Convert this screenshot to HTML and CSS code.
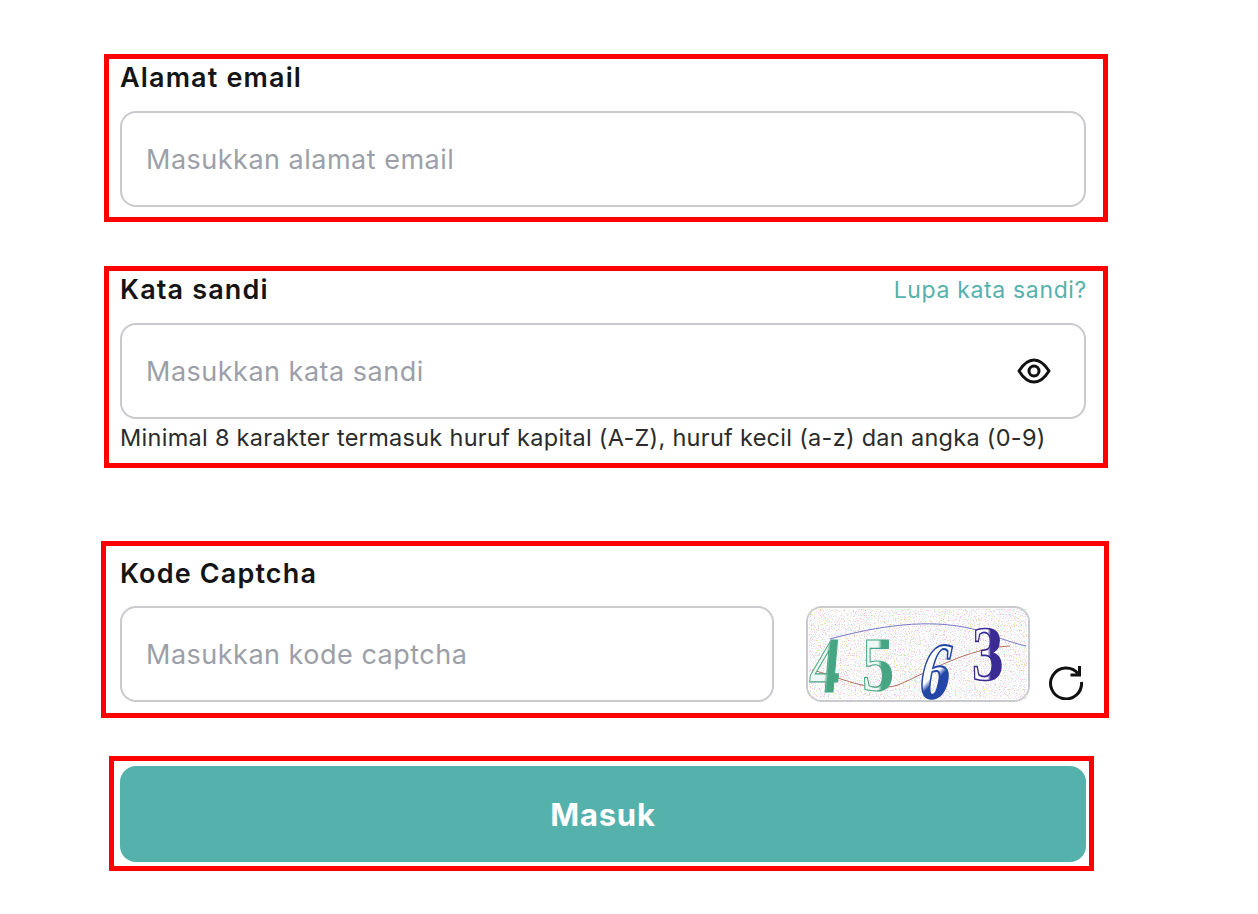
FILE: index.html
```html
<!DOCTYPE html>
<html lang="en">
<head>
    <meta charset="UTF-8">
    <meta name="viewport" content="width=device-width, initial-scale=1.0">
    <title>Masuk</title>
    <link rel="stylesheet" href="styles.css">
</head>
<body>
    <form class="login">
        <div class="box box-email">
            <label class="label">Alamat email</label>
            <div class="field">
                <input class="input" type="email" placeholder="Masukkan alamat email">
            </div>
        </div>

        <div class="box box-password">
            <div class="label-row">
                <label class="label">Kata sandi</label>
                <a class="forgot" href="#">Lupa kata sandi?</a>
            </div>
            <div class="field">
                <input class="input" type="password" placeholder="Masukkan kata sandi">
                <svg class="eye" viewBox="0 0 34 34" fill="none" stroke="#111" stroke-width="3">
                    <path d="M2 17 C7 9 12 6 17 6 C22 6 27 9 32 17 C27 25 22 28 17 28 C12 28 7 25 2 17 Z" stroke-linejoin="round"/>
                    <circle cx="17" cy="17" r="5"/>
                </svg>
            </div>
            <p class="hint">Minimal 8 karakter termasuk huruf kapital (A-Z), huruf kecil (a-z) dan angka (0-9)</p>
        </div>

        <div class="box box-captcha">
            <label class="label">Kode Captcha</label>
            <div class="captcha-row">
                <input class="input captcha-input" type="text" placeholder="Masukkan kode captcha">
                <svg class="captcha-img" viewBox="0 0 220 92">
                    <defs>
                        <filter id="noise" x="0" y="0" width="100%" height="100%">
                            <feTurbulence type="fractalNoise" baseFrequency="0.8" numOctaves="1" seed="7"/>
                            <feColorMatrix type="matrix" values="2.5 0 0 0 -0.7  0 2.5 0 0 -0.8  0 0 2.5 0 -0.5  5 5 0 0 -5.1"/>
                        </filter>
                        <linearGradient id="shade-green">
                            <stop offset="0.5" stop-color="#eef8f4"/>
                            <stop offset="0.62" stop-color="#46a583"/>
                        </linearGradient>
                        <linearGradient id="shade-blue" x2="0.4" y2="1">
                            <stop offset="0.62" stop-color="#fff"/>
                            <stop offset="0.72" stop-color="#2446a6"/>
                        </linearGradient>
                        <linearGradient id="shade-purple">
                            <stop offset="0.5" stop-color="#fff"/>
                            <stop offset="0.6" stop-color="#3a2a94"/>
                        </linearGradient>
                    </defs>
                    <rect width="220" height="92" rx="14" fill="#fff"/>
                    <rect x="1" y="1" width="218" height="90" rx="13" filter="url(#noise)"/>
                    <path d="M22 31 C70 18 120 10 165 21 C185 27 200 34 218 38" fill="none" stroke="#7a78c8" stroke-width="1"/>
                    <path d="M4 62 C30 68 62 86 90 77 C120 64 160 40 202 38" fill="none" stroke="#b5705f" stroke-width="1"/>
                    <text class="digit digit-4" transform="translate(0 84) skewX(-5) scale(.76 1)" font-size="79">4</text>
                    <text class="digit digit-5" transform="translate(54 82) scale(.84 1)" font-size="76">5</text>
                    <text class="digit digit-6" transform="translate(108 90) skewX(-12) scale(.74 1)" font-size="80">6</text>
                    <text class="digit digit-3" transform="translate(164 72) scale(.8 1)" font-size="78">3</text>
                </svg>
                <svg class="reload" viewBox="0 0 36 36" fill="none" stroke="#111" stroke-width="3">
                    <path d="M30 9.5 A15.5 15.5 0 1 0 33.5 18"/>
                    <path d="M31.5 2 V11 H22.5"/>
                </svg>
            </div>
        </div>

        <div class="box box-submit">
            <button class="submit" type="button">Masuk</button>
        </div>
    </form>
</body>
</html>
```

FILE: styles.css
```css
* {
    box-sizing: border-box;
}
body {
    margin: 0;
    background: white;
    font-family: Inter, "Noto Sans", sans-serif;
    color: #141414;
}
.login {
    padding-top: 54px;
    height: 914px;
    overflow: hidden;
}
.box {
    border: 5px solid #ff0000;
    padding: 0 17px 0 11px;
    margin-left: 104px;
    width: 1004px;
}
.box-email {
    height: 168px;
    margin-bottom: 44px;
}
.box-password {
    height: 202px;
    margin-bottom: 73px;
}
.box-captcha {
    height: 177px;
    width: 1008px;
    margin-left: 101px;
    margin-bottom: 38px;
    padding-left: 14px;
    padding-right: 20px;
    padding-top: 9px;
}
.box-submit {
    height: 115px;
    width: 985px;
    margin-left: 109px;
    padding: 5px 0 0 6px;
}
.label {
    display: block;
    font-size: 27px;
    font-weight: 600;
    line-height: 38px;
    letter-spacing: 1.15px;
}
.label-row {
    display: flex;
    justify-content: space-between;
    align-items: center;
}
.forgot {
    color: #55b1ac;
    font-size: 23px;
    letter-spacing: 0.65px;
    text-decoration: none;
    margin-right: -1px;
}
.field {
    position: relative;
    margin-top: 14px;
}
.input {
    display: block;
    width: 100%;
    height: 96px;
    border: 2px solid #c9cacd;
    border-radius: 16px;
    padding: 0 24px;
    font-family: inherit;
    font-size: 27px;
    letter-spacing: 0.5px;
    background: white;
}
.input::placeholder {
    color: #9c9fa7;
    opacity: 1;
}
.eye {
    position: absolute;
    right: 35px;
    top: 31px;
    width: 34px;
    height: 34px;
}
.hint {
    margin: 3px 0 0;
    font-size: 23.5px;
    line-height: 32px;
    letter-spacing: 0.29px;
    color: #2b2b2b;
}
.captcha-row {
    display: flex;
    align-items: flex-end;
    margin-top: 13px;
}
.captcha-input {
    width: 654px;
    flex: none;
}
.captcha-img {
    width: 224px;
    height: 96px;
    margin-left: 32px;
    border: 2px solid #c9cacd;
    border-radius: 16px;
    flex: none;
    overflow: visible;
}
.digit {
    font-family: "Liberation Serif", serif;
    font-weight: 700;
    stroke-width: 1.2px;
}
.digit-4 {
    fill: url(#shade-green);
    stroke: #46a583;
}
.digit-5 {
    fill: url(#shade-green);
    stroke: #46a583;
}
.digit-6 {
    fill: url(#shade-blue);
    stroke: #2446a6;
    stroke-width: 2px;
}
.digit-3 {
    fill: url(#shade-purple);
    stroke: #3a2a94;
    stroke-width: 1.6px;
}
.reload {
    width: 36px;
    height: 36px;
    margin-left: 18px;
    margin-bottom: 2px;
    flex: none;
}
.submit {
    display: block;
    width: 966px;
    height: 96px;
    border: none;
    border-radius: 16px;
    background: #55b1ac;
    color: white;
    font-family: inherit;
    font-size: 31px;
    font-weight: 700;
    letter-spacing: 0.8px;
}
```
